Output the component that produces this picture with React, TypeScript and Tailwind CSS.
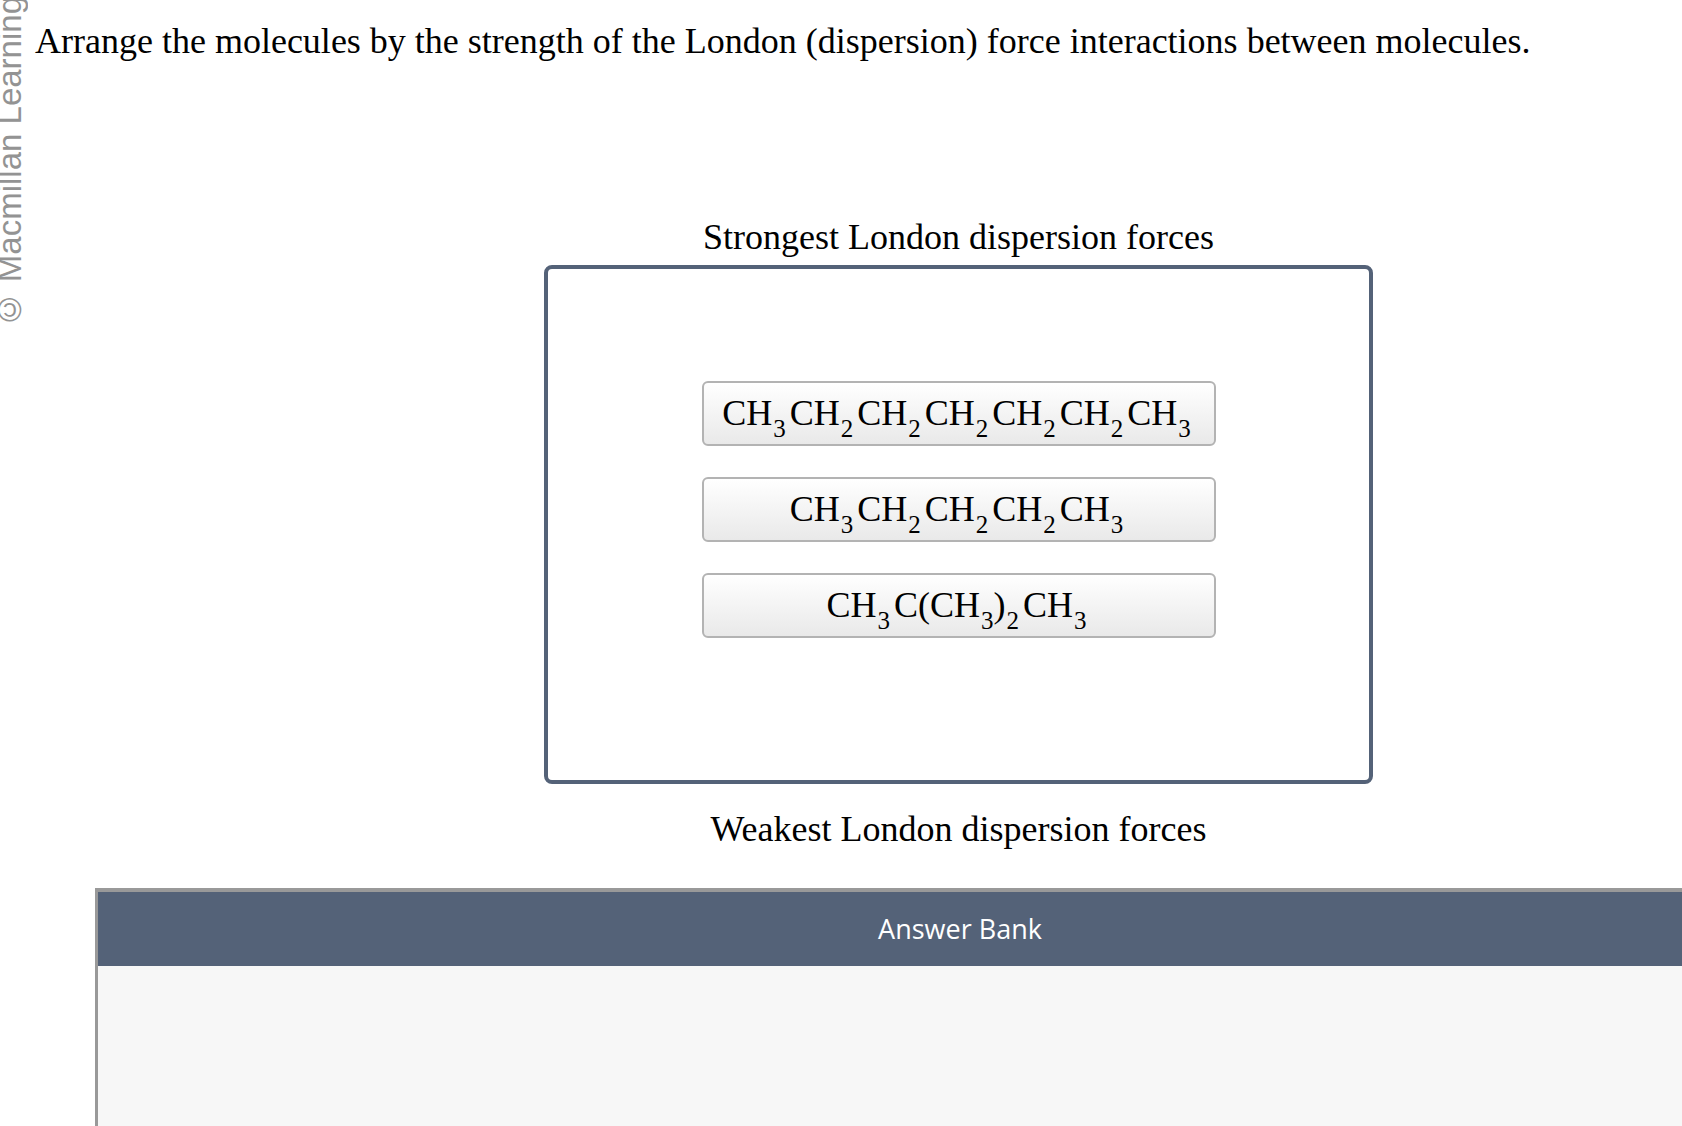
import React from "react";

const serif = { fontFamily: '"Liberation Serif", "Times New Roman", serif' };

function Sub({ n }: { n: string }) {
  return (
    <span className="relative top-[12px] ml-[1px] mr-[4px] text-[25px] leading-none">{n}</span>
  );
}

function CH({ sub }: { sub?: string }) {
  return (
    <>
      <span>CH</span>
      {sub ? <Sub n={sub} /> : null}
    </>
  );
}

function Item({ children }: { children: React.ReactNode }) {
  return (
    <div className="flex h-[65px] w-[514px] items-center justify-center rounded-[6px] border-2 border-[#b3b3b3] bg-gradient-to-b from-[#ffffff] to-[#e9e9e9] pb-[2px] text-[36px] leading-[40px] text-black">
      <div className="flex items-baseline">{children}</div>
    </div>
  );
}

export default function App() {
  return (
    <div className="relative h-[1126px] w-[1682px] overflow-hidden bg-white" style={serif}>
      <div
        className="absolute left-[-7px] top-[-4px] rotate-180 text-[33px] leading-[33px] text-[#939393] [writing-mode:vertical-rl]"
        style={{ fontFamily: '"Liberation Sans", Arial, sans-serif' }}
      >
        © Macmillan Learning
      </div>

      <div className="w-[1917px]">
        <h1 className="pl-[35px] pt-[21px] text-[36px] font-normal leading-[40px] text-black">
          Arrange the molecules by the strength of the London (dispersion) force interactions between molecules.
        </h1>

        <div className="mt-[156px] flex flex-col items-center">
          <div className="text-[36px] leading-[40px] text-black">Strongest London dispersion forces</div>
          <div className="mt-[8px] flex h-[519px] w-[829px] flex-col items-center gap-[31px] rounded-[8px] border-4 border-[#546278] pt-[112px]">
            <Item>
              <CH sub="3" />
              <CH sub="2" />
              <CH sub="2" />
              <CH sub="2" />
              <CH sub="2" />
              <CH sub="2" />
              <CH sub="3" />
            </Item>
            <Item>
              <CH sub="3" />
              <CH sub="2" />
              <CH sub="2" />
              <CH sub="2" />
              <CH sub="3" />
            </Item>
            <Item>
              <CH sub="3" />
              <span>C(</span>
              <CH sub="3" />
              <span className="-ml-[4px]">)</span>
              <Sub n="2" />
              <CH sub="3" />
            </Item>
          </div>
          <div className="mt-[25px] text-[36px] leading-[40px] text-black">Weakest London dispersion forces</div>
        </div>

        <div className="ml-[95px] mt-[39px] w-[1727px] border-l-[3px] border-t-4 border-[#999999]">
          <div
            className="flex h-[74px] items-center justify-center bg-[#546278] text-[27px] text-white"
            style={{ fontFamily: '"Open Sans", sans-serif' }}
          >
            Answer Bank
          </div>
          <div className="h-[300px] bg-[#f7f7f7]" />
        </div>
      </div>
    </div>
  );
}
